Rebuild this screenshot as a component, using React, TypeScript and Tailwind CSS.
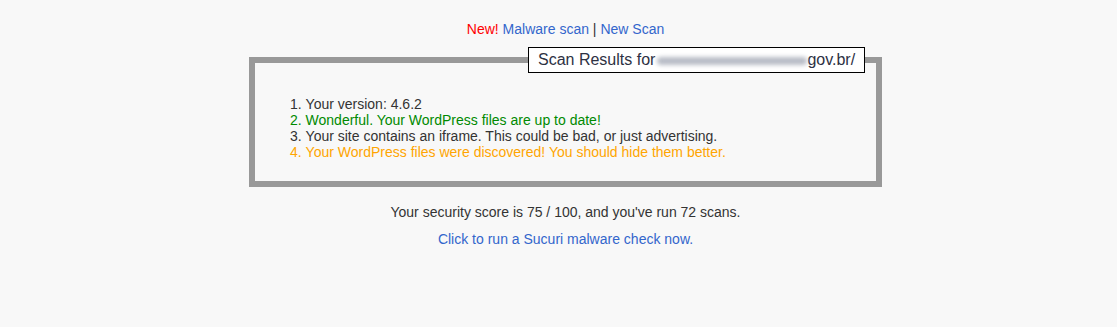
export default function App() {
  return (
    <div className="min-h-screen bg-[#f8f8f8] pl-[14px] pt-[21px] font-['Liberation_Sans',Arial,sans-serif] text-[14px] leading-[16px] text-[#333]">
      <p className="text-center">
        <span className="text-[#ff0000]">New!</span>{' '}
        <a href="#" className="text-[#3366cc]">Malware scan</a> |{' '}
        <a href="#" className="text-[#3366cc]">New Scan</a>
      </p>

      <fieldset className="mx-auto mt-[10px] w-[633px] border-[6px] border-[#999] px-0 pt-[23px] pb-[21px]">
        <legend className="ml-[273px] border border-black bg-white px-[9px] py-[3px] text-[16px] leading-[18px] text-[#2d3143]">
          Scan Results for
          <span className="inline-block w-[152px] align-middle">
            <span className="ml-[2px] block h-[8px] w-[150px] rounded-full bg-[#b8bcc6] blur-[2px]" />
          </span>
          gov.br/
        </legend>
        <ol className="list-inside list-decimal pl-[35px]">
          <li>Your version: 4.6.2</li>
          <li className="text-[#008a00]">Wonderful. Your WordPress files are up to date!</li>
          <li>Your site contains an iframe. This could be bad, or just advertising.</li>
          <li className="text-[#ffa500]">Your WordPress files were discovered! You should hide them better.</li>
        </ol>
      </fieldset>

      <p className="mt-[17px] text-center">Your security score is 75 / 100, and you've run 72 scans.</p>
      <p className="mt-[11px] text-center">
        <a href="#" className="text-[#3366cc]">Click to run a Sucuri malware check now.</a>
      </p>
    </div>
  );
}
